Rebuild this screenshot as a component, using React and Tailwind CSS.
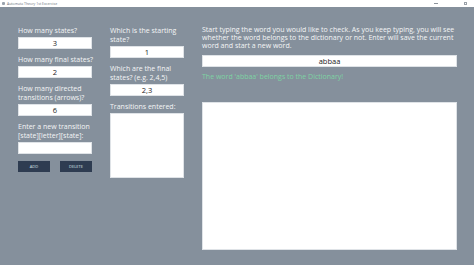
const labelClass = 'text-[7px] leading-[9px] text-[#f4f5f6]'
const inputClass =
  'block h-[12px] w-full border border-[#dfe3e7] bg-white text-center text-[7.5px] leading-[10px] text-[#1b1b1b] outline-none'

function Field({ lines, value, gap = true }) {
  return (
    <div className={gap ? 'mb-[6px]' : ''}>
      <div className={`${labelClass} mb-[2px]`}>
        {lines.map((line) => (
          <div key={line} className="whitespace-nowrap">
            {line}
          </div>
        ))}
      </div>
      <input className={inputClass} defaultValue={value} readOnly />
    </div>
  )
}

function TitleBar() {
  return (
    <div className="flex h-[7px] items-center justify-between bg-white pl-[2px] pr-[7px]">
      <div className="flex items-center gap-[2px]">
        <span className="block h-[3px] w-[3px] rounded-[1px] bg-[#9aa3ad]" />
        <span className="text-[3.5px] leading-[4px] text-[#6b7480]">Automata Theory 1st Excercise</span>
      </div>
      <div className="flex items-center gap-[26px]">
        <span className="block h-[0.5px] w-[4px] bg-[#8d949c]" />
        <span className="block h-[3px] w-[3px] border-[0.5px] border-[#9aa1a8]" />
      </div>
    </div>
  )
}

export default function App() {
  return (
    <div
      className="flex min-h-screen w-full flex-col bg-[#85909c]"
      style={{ fontFamily: '"Open Sans", "Noto Sans", sans-serif' }}
    >
      <TitleBar />
      <div className="flex gap-[18px] pl-[18px] pt-[19px]">
        {/* left column */}
        <div className="w-[74px]">
          <Field lines={['How many states?']} value="3" />
          <Field lines={['How many final states?']} value="2" />
          <Field lines={['How many directed', 'transitions (arrows)?']} value="6" />
          <Field lines={['Enter a new transition', '[state][letter][state]:']} value="" gap={false} />
          <div className="mt-[7px] flex justify-between">
            <button className="h-[11px] w-[32px] bg-[#2e3c51] text-[4px] leading-[11px] text-[#dfe4ea]">
              ADD
            </button>
            <button className="h-[11px] w-[32px] bg-[#2e3c51] text-[4px] leading-[11px] text-[#dfe4ea]">
              DELETE
            </button>
          </div>
        </div>

        {/* middle column */}
        <div className="w-[74px]">
          <Field lines={['Which is the starting', 'state?']} value="1" />
          <Field lines={['Which are the final', 'states? (e.g. 2,4,5)']} value="2,3" />
          <div className={`${labelClass} mb-[2px]`}>Transitions entered:</div>
          <div className="h-[65px] w-full border border-[#dfe3e7] bg-white" />
        </div>

        {/* right column */}
        <div className="w-[255px]">
          <p className="text-[7px] leading-[8px] text-[#f4f5f6]">
            Start typing the word you would like to check. As you keep typing, you will see whether the word
            belongs to the dictionary or not. Enter will save the current word and start a new word.
          </p>
          <input className={`${inputClass} mt-[5px]`} defaultValue="abbaa" readOnly />
          <div className="mt-[6px] text-[7px] leading-[8px] text-[#7dd3a3]">
            The word 'abbaa' belongs to the Dictionary!
          </div>
          <div className="mt-[21px] h-[148px] w-full border border-[#dfe3e7] bg-white" />
        </div>
      </div>
    </div>
  )
}
